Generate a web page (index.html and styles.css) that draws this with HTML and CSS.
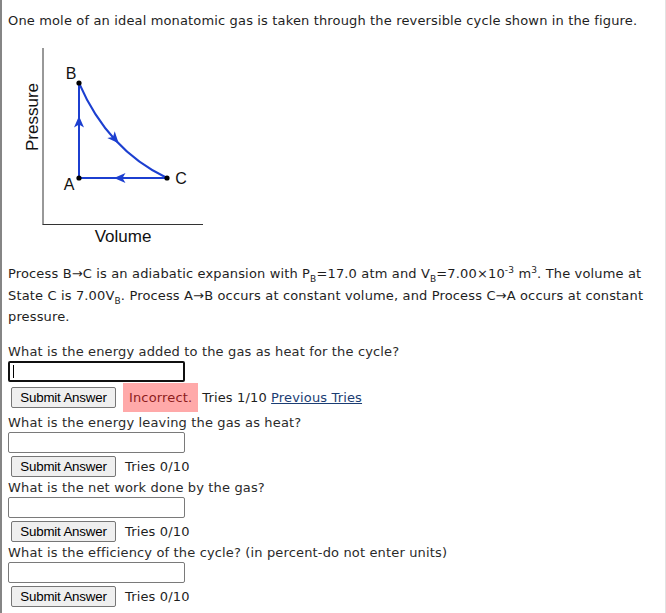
FILE: index.html
```html
<!DOCTYPE html>
<html>
<head>
<meta charset="utf-8">
<link rel="stylesheet" href="styles.css">
</head>
<body>
<div class="page">
  <p class="intro">One mole of an ideal monatomic gas is taken through the reversible cycle shown in the figure.</p>
  <svg class="figure" width="200" height="205" viewBox="0 0 200 205" xmlns="http://www.w3.org/2000/svg">
    <line x1="35" y1="3" x2="35" y2="179.5" stroke="#333" stroke-width="1"/>
    <line x1="34.5" y1="179.5" x2="195" y2="179.5" stroke="#333" stroke-width="1"/>
    <text class="axis" x="24" y="72" transform="rotate(-90 24 72)" text-anchor="middle" dominant-baseline="central">Pressure</text>
    <text class="axis" x="115" y="191" text-anchor="middle" dominant-baseline="central">Volume</text>
    <g fill="none" stroke="#1c3fd0" stroke-width="2">
      <line x1="71" y1="38" x2="71" y2="133"/>
      <line x1="71" y1="133" x2="159" y2="133"/>
      <path d="M71 38 Q100 105 159 133"/>
    </g>
    <g fill="#1c3fd0">
      <path d="M7 0 L-4.5 -5 L-1.5 0 L-4.5 5 Z" transform="translate(71 78) rotate(-90)"/>
      <path d="M7 0 L-4.5 -5 L-1.5 0 L-4.5 5 Z" transform="translate(113 133) rotate(180)"/>
      <path d="M7 0 L-4.5 -5 L-1.5 0 L-4.5 5 Z" transform="translate(106 93) rotate(48)"/>
    </g>
    <g fill="#000">
      <circle cx="71" cy="38" r="2.6"/>
      <circle cx="71" cy="133" r="2.6"/>
      <circle cx="159" cy="133" r="2.6"/>
    </g>
    <text class="pt" x="63" y="28" text-anchor="middle" dominant-baseline="central">B</text>
    <text class="pt" x="61" y="139" text-anchor="middle" dominant-baseline="central">A</text>
    <text class="pt" x="173" y="133" text-anchor="middle" dominant-baseline="central">C</text>
  </svg>
  <p class="problem">Process B→C is an adiabatic expansion with P<sub>B</sub>=17.0 atm and V<sub>B</sub>=7.00×10<sup>-3</sup> m<sup>3</sup>. The volume at State C is 7.00V<sub>B</sub>. Process A→B occurs at constant volume, and Process C→A occurs at constant pressure.</p>

  <div class="q q-first">
    <div class="q-label">What is the energy added to the gas as heat for the cycle?</div>
    <div class="field-wrap"><input class="field focused" type="text"><span class="caret"></span></div>
    <div class="row">
      <button class="submit">Submit Answer</button>
      <span class="badge">Incorrect.</span>
      <span class="tries">Tries 1/10 <a href="#" class="prev">Previous Tries</a></span>
    </div>
  </div>

  <div class="q">
    <div class="q-label">What is the energy leaving the gas as heat?</div>
    <input class="field" type="text">
    <div class="row">
      <button class="submit">Submit Answer</button>
      <span class="tries plain">Tries 0/10</span>
    </div>
  </div>

  <div class="q">
    <div class="q-label">What is the net work done by the gas?</div>
    <input class="field" type="text">
    <div class="row">
      <button class="submit">Submit Answer</button>
      <span class="tries plain">Tries 0/10</span>
    </div>
  </div>

  <div class="q">
    <div class="q-label">What is the efficiency of the cycle? (in percent-do not enter units)</div>
    <input class="field" type="text">
    <div class="row">
      <button class="submit">Submit Answer</button>
      <span class="tries plain">Tries 0/10</span>
    </div>
  </div>
</div>
</body>
</html>
```

FILE: styles.css
```css
html, body {
  margin: 0;
  padding: 0;
  background: #fff;
}
.page {
  width: 666px;
  min-height: 613px;
  box-sizing: border-box;
  border-left: 2px solid #858585;
  border-right: 1px solid #e2e2e2;
  padding: 0 0 0 6px;
  font-family: "DejaVu Sans", Verdana, sans-serif;
  font-size: 13px;
  letter-spacing: 0.15px;
  color: #1e1e1e;
}
.intro {
  margin: 0;
  padding-top: 13px;
  line-height: 16px;
}
.figure {
  display: block;
  margin-top: 16px;
}
.axis {
  font-family: "Liberation Sans", Arial, sans-serif;
  font-size: 17px;
  letter-spacing: 0;
  fill: #111;
}
.pt {
  font-family: "Liberation Sans", Arial, sans-serif;
  font-size: 16px;
  letter-spacing: 0;
  fill: #111;
}
.problem {
  margin: 13px 0 0 0;
  line-height: 21.5px;
  padding-right: 2px;
}
.problem sub, .problem sup {
  font-size: 9px;
  line-height: 0;
}
.q-first {
  margin-top: 16px;
}
.q {
  display: flex;
  flex-direction: column;
  align-items: flex-start;
}
.q + .q {
  margin-top: 3px;
}
.q-label {
  line-height: 16px;
  color: #2a2a2a;
}
.field {
  display: block;
  box-sizing: border-box;
  width: 177px;
  height: 21px;
  margin: 1px 0 0 0;
  border: 1px solid #7a7a7a;
  border-radius: 2px;
  padding: 0 4px;
  background: #fff;
  font: 13px "DejaVu Sans", sans-serif;
}
.field-wrap {
  position: relative;
  margin-top: 1px;
}
.field.focused {
  margin: 0;
  border: 2px solid #101010;
  outline: none;
}
.caret {
  position: absolute;
  left: 5px;
  top: 4px;
  width: 1px;
  height: 13px;
  background: #000;
}
.row {
  display: flex;
  align-items: center;
  margin-top: 3px;
}
.q-first .row {
  margin-top: 1px;
}
.submit {
  box-sizing: border-box;
  height: 21px;
  width: 105px;
  margin-left: 3px;
  padding: 0;
  font-family: "Liberation Sans", Arial, sans-serif;
  font-size: 13.33px;
  letter-spacing: -0.2px;
  color: #000;
  background: #efefef;
  border: 1px solid #767676;
  border-radius: 2px;
}
.badge {
  margin-left: 7px;
  padding: 0 6px;
  height: 29px;
  line-height: 29px;
  background: #ffa9a9;
  color: #8e1d1d;
}
.tries {
  margin-left: 4px;
  color: #1e1e1e;
}
.tries.plain {
  margin-left: 9px;
}
.prev {
  color: #1b3d73;
  text-decoration: underline;
}
```
